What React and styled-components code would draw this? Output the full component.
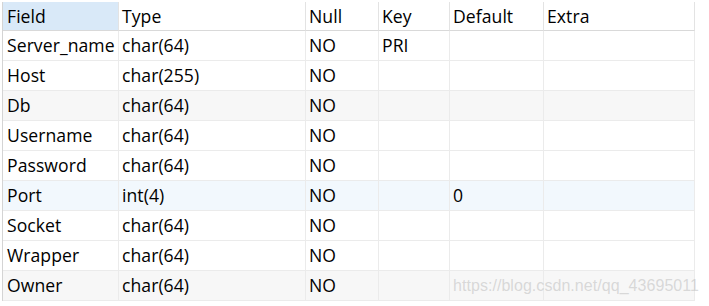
import React from "react";
import styled, { createGlobalStyle } from "styled-components";

const Global = createGlobalStyle`
  html, body { margin: 0; padding: 0; background: #ffffff; }
  body { width: 709px; height: 306px; overflow: hidden; }
`;

const Page = styled.div`
  position: relative;
  width: 709px;
  height: 306px;
  padding: 2px 0 0 2px;
  box-sizing: border-box;
  font-family: "Open Sans", "Noto Sans", sans-serif;
  font-size: 17.6px;
  letter-spacing: 0.05px;
  color: #000;
`;

const Grid = styled.div`
  display: grid;
  grid-template-columns: 116px 187px 73px 71px 94px 151px;
  width: 693px;
  border-left: 1px solid #d4d4d4;
`;

const HeadCell = styled.div`
  height: 28px;
  line-height: 28px;
  padding-left: ${(p) => (p.$first ? 4 : 3)}px;
  border-right: 1px solid #e3e3e3;
  border-bottom: 1px solid #d9d9d9;
  background: ${(p) => (p.$active ? "#d9e9f8" : "#ffffff")};
  white-space: nowrap;
  overflow: hidden;
  width: calc(100% - ${(p) => (p.$first ? 5 : 4)}px);
`;

const Cell = styled.div`
  height: 29px;
  line-height: 29px;
  padding-left: ${(p) => (p.$first ? 4 : 3)}px;
  border-right: 1px solid #ebebeb;
  border-bottom: 1px solid #ebebeb;
  background: ${(p) =>
    p.$tone === "blue" ? "#f2f8fd" : p.$tone === "grey" ? "#f7f7f7" : "#ffffff"};
  white-space: nowrap;
  overflow: hidden;
  width: calc(100% - ${(p) => (p.$first ? 5 : 4)}px);
`;

const Watermark = styled.div`
  position: absolute;
  right: 10px;
  top: 277px;
  font-family: "Liberation Sans", Arial, sans-serif;
  font-size: 16px;
  color: rgba(185, 185, 185, 0.5);
  pointer-events: none;
  white-space: nowrap;
`;

const headers = ["Field", "Type", "Null", "Key", "Default", "Extra"];

const rows = [
  ["Server_name", "char(64)", "NO", "PRI", "", ""],
  ["Host", "char(255)", "NO", "", "", ""],
  ["Db", "char(64)", "NO", "", "", ""],
  ["Username", "char(64)", "NO", "", "", ""],
  ["Password", "char(64)", "NO", "", "", ""],
  ["Port", "int(4)", "NO", "", "0", ""],
  ["Socket", "char(64)", "NO", "", "", ""],
  ["Wrapper", "char(64)", "NO", "", "", ""],
  ["Owner", "char(64)", "NO", "", "", ""],
];

const tones = ["", "", "grey", "", "", "blue", "", "", "grey"];

export default function App() {
  return (
    <>
      <Global />
      <Page>
        <Grid>
          {headers.map((h, i) => (
            <HeadCell key={h} $first={i === 0} $active={i === 0}>
              {h}
            </HeadCell>
          ))}
          {rows.map((r, ri) =>
            r.map((v, ci) => (
              <Cell key={ri + "-" + ci} $first={ci === 0} $tone={tones[ri]}>
                {v}
              </Cell>
            ))
          )}
        </Grid>
        <Watermark>https://blog.csdn.net/qq_43695011</Watermark>
      </Page>
    </>
  );
}
